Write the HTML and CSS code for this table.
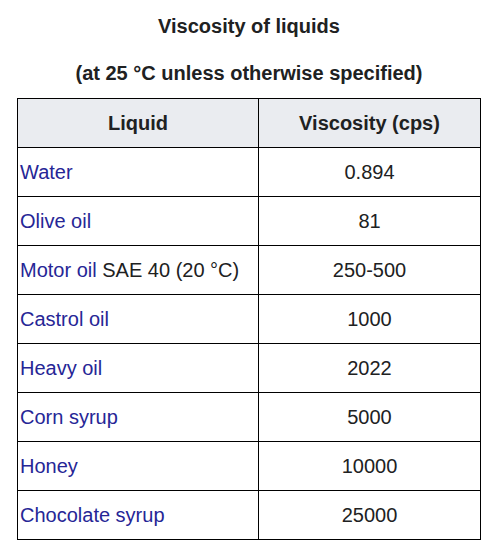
FILE: index.html
```html
<!doctype html>
<html>
  <head>
    <meta charset="utf-8">
    <title>Viscosity of liquids</title>
    <link rel="stylesheet" href="styles.css">
  </head>
  <body>
    <table class="wikitable viscosity">
      <caption>
        <span class="caption-line">Viscosity of liquids</span>
        <span class="caption-line sub">(at 25 °C unless otherwise specified)</span>
      </caption>
      <thead>
        <tr>
          <th class="col-liquid">Liquid</th>
          <th class="col-value">Viscosity (cps)</th>
        </tr>
      </thead>
      <tbody>
        <tr><td><a href="#">Water</a></td><td class="num">0.894</td></tr>
        <tr><td><a href="#">Olive oil</a></td><td class="num">81</td></tr>
        <tr><td><a href="#">Motor oil</a> SAE 40 (20 °C)</td><td class="num">250-500</td></tr>
        <tr><td><a href="#">Castrol oil</a></td><td class="num">1000</td></tr>
        <tr><td><a href="#">Heavy oil</a></td><td class="num">2022</td></tr>
        <tr><td><a href="#">Corn syrup</a></td><td class="num">5000</td></tr>
        <tr><td><a href="#">Honey</a></td><td class="num">10000</td></tr>
        <tr><td><a href="#">Chocolate syrup</a></td><td class="num">25000</td></tr>
      </tbody>
    </table>
  </body>
</html>
```

FILE: styles.css
```css
body {
  margin: 0;
  padding-top: 14px;
  background: #fff;
  color: #202122;
  font-family: "Liberation Sans", Arial, sans-serif;
  font-size: 20px;
}
table.wikitable {
  border-collapse: collapse;
  margin-left: 17px;
  width: 464px;
  line-height: 24px;
}
table.wikitable caption {
  font-weight: bold;
  text-align: center;
  padding-bottom: 13px;
}
.caption-line {
  display: block;
}
.caption-line.sub {
  margin-top: 23px;
}
table.wikitable th,
table.wikitable td {
  border: 1px solid #000;
  padding: 12px 2px;
}
table.wikitable th {
  background-color: #eaecf0;
  text-align: center;
}
th.col-liquid {
  width: 236px;
}
td.num {
  text-align: center;
}
table.wikitable a {
  color: #262696;
  text-decoration: none;
}
```
